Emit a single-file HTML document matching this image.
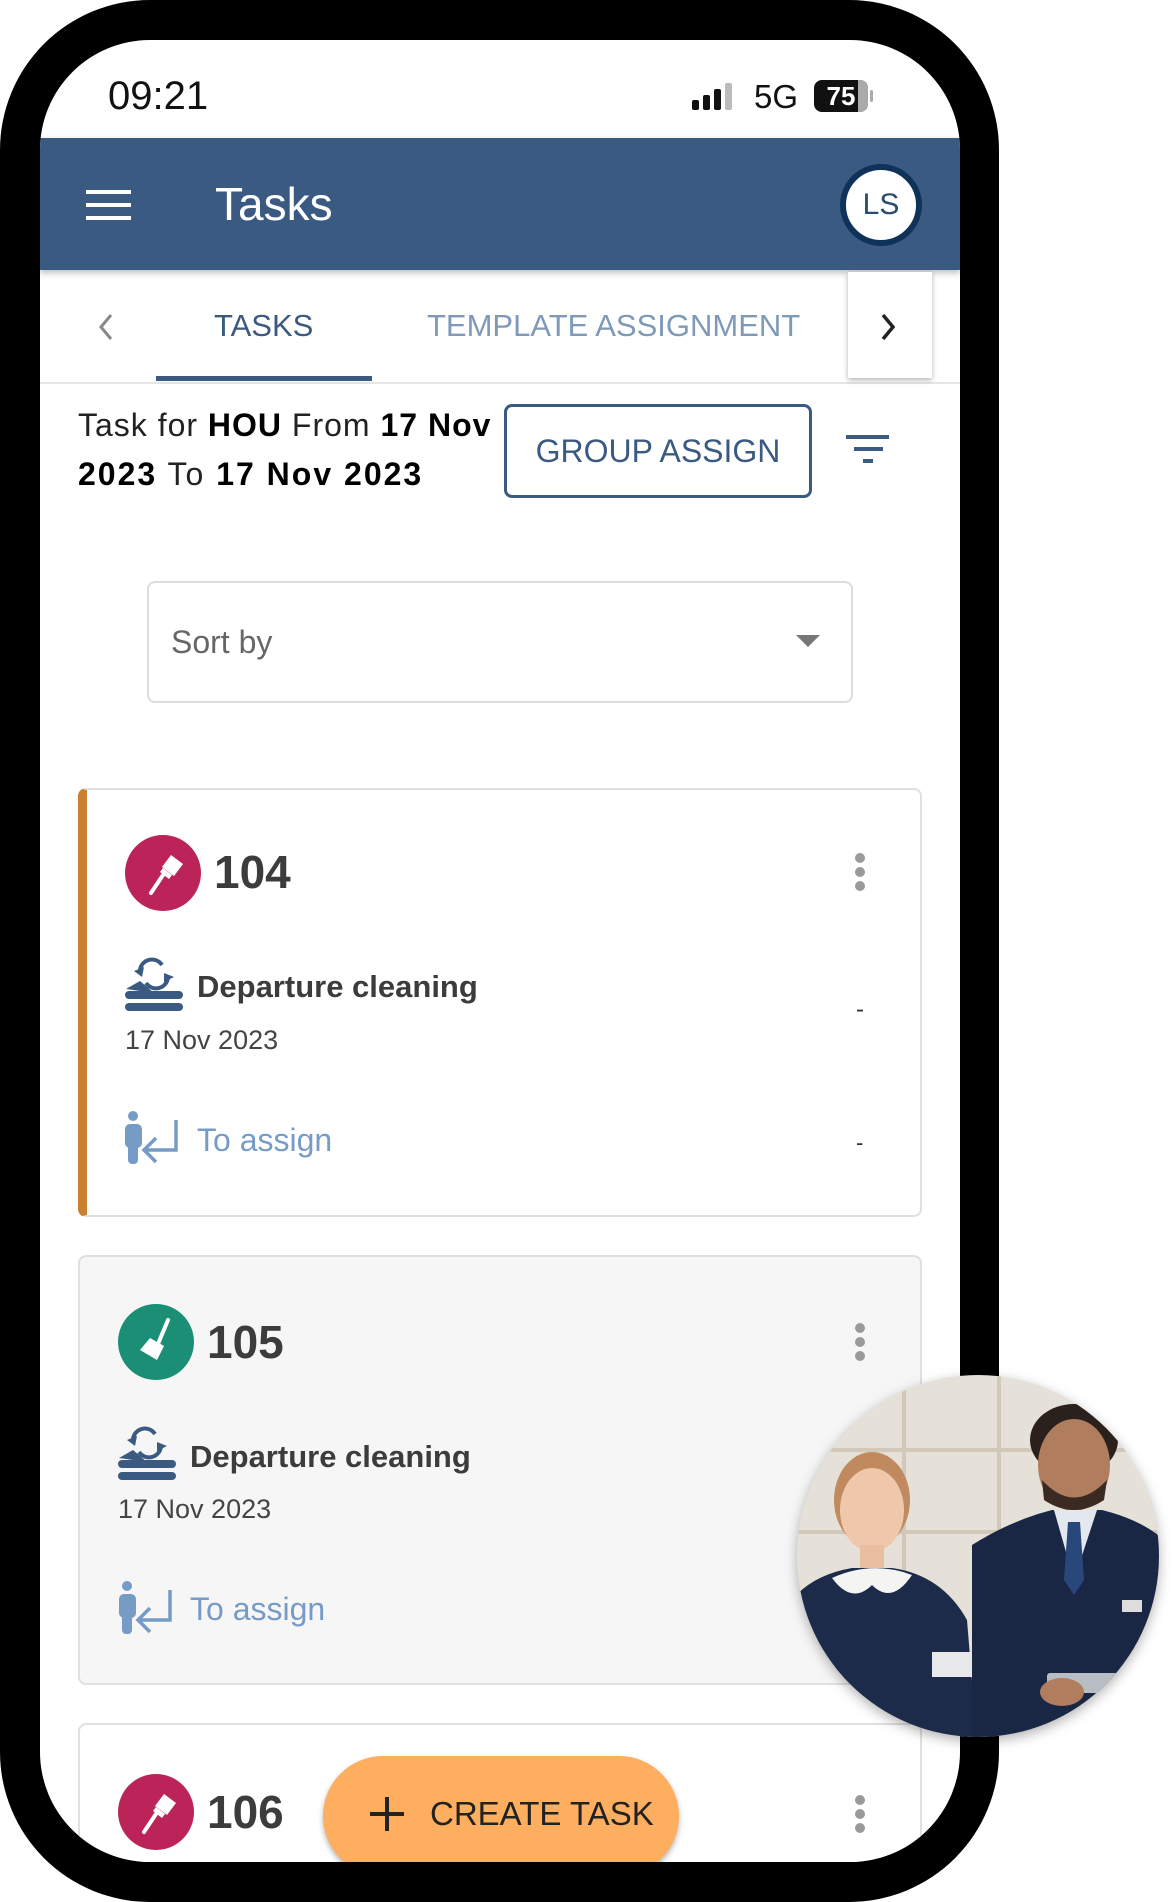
<!DOCTYPE html>
<html><head><meta charset="utf-8">
<style>
*{margin:0;padding:0;box-sizing:border-box}
html,body{width:1173px;height:1902px;overflow:hidden}
body{background:#fff;position:relative;font-family:"Liberation Sans",Arial,sans-serif}
.abs{position:absolute}
.frame{left:0;top:0;width:999px;height:1902px;background:#000;border-radius:150px}
.screen{left:40px;top:40px;width:920px;height:1822px;background:#fff;border-radius:110px;overflow:hidden}
.t{position:absolute;white-space:nowrap}
.card{position:absolute;left:38px;width:844px;border:2px solid #e0e0e0;border-radius:8px}
.num{font-size:46px;color:#3c3c3c;font-weight:bold}
.dep{font-size:31px;color:#3c3c3c;font-weight:bold}
.date{font-size:27px;color:#444}
.asg{font-size:32px;color:#779bc7}
.dot{position:absolute;width:10px;height:10px;border-radius:50%;background:#9a9a9a}
</style></head><body>
<div class="abs frame"></div>
<div class="abs screen">
  <div class="t" style="left:68px;top:34px;font-size:40px;color:#111">09:21</div>
  <svg class="abs" style="left:650px;top:42px" width="60" height="30"><rect x="2" y="18" width="7" height="10" rx="2" fill="#111"/><rect x="13" y="13" width="7" height="15" rx="2" fill="#111"/><rect x="24" y="7" width="7" height="21" rx="2" fill="#111"/><rect x="35" y="1" width="7" height="27" rx="2" fill="#bbb"/></svg>
  <div class="t" style="left:714px;top:38px;font-size:33px;color:#111">5G</div>
  <div class="abs" style="left:774px;top:40px;width:54px;height:32px;border-radius:8px;background:#111;color:#fff;font-weight:bold;font-size:26px;text-align:center;line-height:32px;overflow:hidden"><span>75</span><div class="abs" style="right:0;top:0;width:10px;height:32px;background:#aaa"></div></div>
  <div class="abs" style="left:830px;top:50px;width:3px;height:12px;background:#aaa;border-radius:2px"></div>
  <div class="abs" style="left:0;top:98px;width:920px;height:132px;background:#3b5a82;box-shadow:0 3px 6px rgba(0,0,0,.25)"></div>
  <div class="abs" style="left:46px;top:150px;width:45px;height:4px;background:#fff;box-shadow:0 13px 0 #fff,0 26px 0 #fff"></div>
  <div class="t" style="left:175px;top:137px;font-size:46px;color:#fff">Tasks</div>
  <div class="abs" style="left:800px;top:124px;width:82px;height:82px;border-radius:50%;background:#fff;border:6px solid #0f3358;text-align:center;line-height:70px;font-size:30px;color:#2a4a70">LS</div>
  <svg class="abs" style="left:56px;top:272px" width="20" height="30"><path d="M15 3 L5 15 L15 27" stroke="#888" stroke-width="3" fill="none"/></svg>
  <div class="t" style="left:174px;top:268px;font-size:31px;color:#3b5a82">TASKS</div>
  <div class="t" style="left:387px;top:268px;font-size:31px;color:#7f9ab8">TEMPLATE ASSIGNMENT</div>
  <div class="abs" style="left:116px;top:336px;width:216px;height:5px;background:#3b5a82"></div>
  <div class="abs" style="left:0;top:342px;width:920px;height:2px;background:#e5e5e5"></div>
  <div class="abs" style="left:808px;top:232px;width:84px;height:106px;background:#fff;box-shadow:0 2px 5px rgba(0,0,0,.3)"></div>
  <svg class="abs" style="left:838px;top:272px" width="20" height="30"><path d="M5 3 L15 15 L5 27" stroke="#222" stroke-width="3.5" fill="none"/></svg>
  <div class="t" style="left:38px;top:367px;font-size:32px;color:#222;letter-spacing:1px">Task for <b style="color:#000">HOU</b> From <b style="color:#000">17 Nov</b></div>
  <div class="t" style="left:38px;top:416px;font-size:32px;color:#222;letter-spacing:2px"><b style="color:#000">2023</b> To <b style="color:#000">17 Nov 2023</b></div>
  <div class="abs" style="left:464px;top:364px;width:308px;height:94px;border:3px solid #3b5a82;border-radius:8px;text-align:center;line-height:88px;font-size:32px;color:#3b5a82">GROUP ASSIGN</div>
  <div class="abs" style="left:806px;top:395px;width:43px;height:4px;background:#3b5a82"></div>
  <div class="abs" style="left:814px;top:407px;width:29px;height:4px;background:#3b5a82"></div>
  <div class="abs" style="left:823px;top:419px;width:10px;height:4px;background:#3b5a82"></div>
  <div class="abs" style="left:107px;top:541px;width:706px;height:122px;border:2px solid #ddd;border-radius:8px"></div>
  <div class="t" style="left:131px;top:584px;font-size:32px;color:#666">Sort by</div>
  <div class="abs" style="left:756px;top:595px;width:0;height:0;border-left:12px solid transparent;border-right:12px solid transparent;border-top:12px solid #777"></div>

  <div class="card" style="top:748px;height:429px;background:#fff;border-left:9px solid #c98030"></div>
  <svg class="abs" style="left:85px;top:795px" width="76" height="76"><circle cx="38" cy="38" r="38" fill="#bc2459"/><path d="M46 20 L58 29 L49 41 L37 32 Z" fill="#fff"/><path d="M38 33 L47 40 L44 44 L35 37 Z" fill="#fff"/><path d="M38 40 L26 58" stroke="#fff" stroke-width="4" stroke-linecap="round"/></svg>
  <div class="t num" style="left:174px;top:805px">104</div>
  <div class="dot" style="left:815px;top:813px"></div><div class="dot" style="left:815px;top:827px"></div><div class="dot" style="left:815px;top:841px"></div>
  <svg class="abs" style="left:84px;top:915px" width="62" height="58"><path d="M16 18 A12 12 0 0 1 38 10" stroke="#3b5a82" stroke-width="4" fill="none"/><path d="M10 16 L18 22 L20 12Z" fill="#3b5a82"/><path d="M44 22 A12 12 0 0 1 22 28" stroke="#3b5a82" stroke-width="4" fill="none"/><path d="M50 22 L40 18 L40 27Z" fill="#3b5a82"/><path d="M2 34 L16 26 L30 38 Z" fill="#3b5a82"/><rect x="1" y="36" width="58" height="8" rx="4" fill="#3b5a82"/><rect x="1" y="48" width="58" height="8" rx="4" fill="#3b5a82"/></svg>
  <div class="t dep" style="left:157px;top:929px">Departure cleaning</div>
  <div class="t date" style="left:85px;top:985px">17 Nov 2023</div>
  <div class="t" style="left:816px;top:956px;font-size:24px;color:#333">-</div>
  <svg class="abs" style="left:84px;top:1070px" width="56" height="56"><circle cx="9" cy="6" r="5" fill="#779bc7"/><rect x="1" y="14" width="17" height="24" rx="5" fill="#779bc7"/><rect x="4" y="30" width="10" height="24" rx="4" fill="#779bc7"/><path d="M52 10 V40 H22 M32 28 L20 40 L32 52" stroke="#779bc7" stroke-width="3.5" fill="none"/></svg>
  <div class="t asg" style="left:157px;top:1082px">To assign</div>
  <div class="t" style="left:816px;top:1090px;font-size:22px;color:#333">-</div>

  <div class="card" style="top:1215px;height:430px;background:#f6f6f6"></div>
  <svg class="abs" style="left:78px;top:1264px" width="76" height="76"><circle cx="38" cy="38" r="38" fill="#1b8f76"/><path d="M50 16 L40 40" stroke="#fff" stroke-width="4" stroke-linecap="round"/><path d="M32 34 L46 42 L39 56 L22 46 Z" fill="#fff"/></svg>
  <div class="t num" style="left:167px;top:1275px">105</div>
  <div class="dot" style="left:815px;top:1283px"></div><div class="dot" style="left:815px;top:1297px"></div><div class="dot" style="left:815px;top:1311px"></div>
  <svg class="abs" style="left:77px;top:1384px" width="62" height="58"><path d="M16 18 A12 12 0 0 1 38 10" stroke="#3b5a82" stroke-width="4" fill="none"/><path d="M10 16 L18 22 L20 12Z" fill="#3b5a82"/><path d="M44 22 A12 12 0 0 1 22 28" stroke="#3b5a82" stroke-width="4" fill="none"/><path d="M50 22 L40 18 L40 27Z" fill="#3b5a82"/><path d="M2 34 L16 26 L30 38 Z" fill="#3b5a82"/><rect x="1" y="36" width="58" height="8" rx="4" fill="#3b5a82"/><rect x="1" y="48" width="58" height="8" rx="4" fill="#3b5a82"/></svg>
  <div class="t dep" style="left:150px;top:1399px">Departure cleaning</div>
  <div class="t date" style="left:78px;top:1454px">17 Nov 2023</div>
  <svg class="abs" style="left:78px;top:1540px" width="56" height="56"><circle cx="9" cy="6" r="5" fill="#779bc7"/><rect x="1" y="14" width="17" height="24" rx="5" fill="#779bc7"/><rect x="4" y="30" width="10" height="24" rx="4" fill="#779bc7"/><path d="M52 10 V40 H22 M32 28 L20 40 L32 52" stroke="#779bc7" stroke-width="3.5" fill="none"/></svg>
  <div class="t asg" style="left:150px;top:1551px">To assign</div>

  <div class="card" style="top:1683px;height:300px;background:#fff"></div>
  <svg class="abs" style="left:78px;top:1734px" width="76" height="76"><circle cx="38" cy="38" r="38" fill="#bc2459"/><path d="M46 20 L58 29 L49 41 L37 32 Z" fill="#fff"/><path d="M38 33 L47 40 L44 44 L35 37 Z" fill="#fff"/><path d="M38 40 L26 58" stroke="#fff" stroke-width="4" stroke-linecap="round"/></svg>
  <div class="t num" style="left:167px;top:1745px">106</div>
  <div class="dot" style="left:815px;top:1755px"></div><div class="dot" style="left:815px;top:1769px"></div><div class="dot" style="left:815px;top:1783px"></div>
  <div class="abs" style="left:283px;top:1716px;width:356px;height:120px;border-radius:60px;background:#fdae5e;box-shadow:0 3px 6px rgba(0,0,0,.3)"></div>
  <div class="abs" style="left:330px;top:1772px;width:34px;height:4px;background:#222"></div>
  <div class="abs" style="left:345px;top:1757px;width:4px;height:34px;background:#222"></div>
  <div class="t" style="left:390px;top:1755px;font-size:33px;color:#222">CREATE TASK</div>
</div>

<svg class="abs" style="left:792px;top:1370px;filter:drop-shadow(0 4px 6px rgba(0,0,0,.3))" width="372" height="372">
  <defs><clipPath id="c"><circle cx="186" cy="186" r="181"/></clipPath></defs>
  <g clip-path="url(#c)">
    <rect width="372" height="372" fill="#e6e1d8"/>
    <rect x="110" y="0" width="4" height="372" fill="#d2c8b9"/>
    <rect x="205" y="0" width="4" height="372" fill="#d2c8b9"/>
    <rect x="0" y="78" width="372" height="4" fill="#d2c8b9"/>
    <rect x="0" y="160" width="372" height="4" fill="#d2c8b9"/>
    <ellipse cx="80" cy="130" rx="38" ry="48" fill="#c08a5e"/>
    <ellipse cx="80" cy="140" rx="32" ry="42" fill="#efc7ab"/>
    <rect x="68" y="175" width="24" height="28" fill="#e9bea0"/>
    <path d="M0 230 Q20 205 60 198 L100 198 Q150 205 175 250 L185 372 L0 372Z" fill="#1d2b4a"/>
    <path d="M40 208 Q80 190 120 205 Q100 235 80 215 Q60 235 40 208Z" fill="#f4f4f2"/>
    <rect x="140" y="282" width="40" height="25" fill="#e8e8ea"/>
    <ellipse cx="282" cy="70" rx="44" ry="36" fill="#2b211c"/>
    <ellipse cx="282" cy="95" rx="36" ry="46" fill="#b07e5e"/>
    <path d="M250 110 Q282 145 315 110 L312 130 Q282 150 252 130Z" fill="#3a2a22"/>
    <path d="M180 175 Q220 150 260 140 L310 140 Q350 150 372 170 L372 372 L180 372Z" fill="#1a2744"/>
    <path d="M262 140 L282 210 L305 140Z" fill="#e3e8ef"/>
    <path d="M276 152 L288 152 L292 210 L282 225 L272 210Z" fill="#28477a"/>
    <rect x="330" y="230" width="20" height="12" fill="#ddd"/>
    <rect x="255" y="303" width="80" height="20" rx="3" fill="#b9bec4"/>
    <ellipse cx="270" cy="322" rx="22" ry="14" fill="#b07e5e"/>
  </g>
</svg>
</body></html>
